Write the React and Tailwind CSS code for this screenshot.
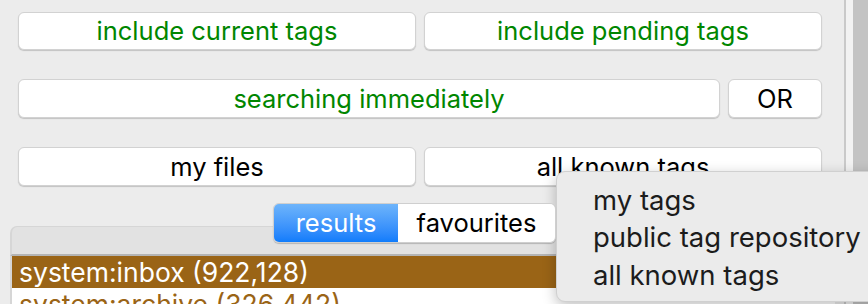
import React from "react";

const font = { fontFamily: "Inter, 'Liberation Sans', sans-serif" };

function Btn({ children, className = "", green = false }) {
  return (
    <div
      className={`flex items-center justify-center bg-white rounded-[6px] border border-[#d2d2d2] shadow-[0_1px_1px_rgba(0,0,0,0.18)] text-[25.5px] leading-none ${green ? "text-[#008600]" : "text-black"} ${className}`}
    >
      {children}
    </div>
  );
}

export default function App() {
  return (
    <div
      className="w-[868px] h-[304px] bg-[#ececec] relative overflow-hidden flex"
      style={font}
    >
      <div className="w-[844px] flex flex-col">
        <div className="pl-[18px] w-[822px] flex flex-col">
          <div className="mt-[12px] flex gap-[8px] h-[38px]">
            <Btn green className="w-[398px]">include current tags</Btn>
            <Btn green className="w-[398px]">include pending tags</Btn>
          </div>
          <div className="mt-[29px] flex gap-[8px] h-[39px]">
            <Btn green className="w-[702px]">searching immediately</Btn>
            <Btn className="w-[94px]">OR</Btn>
          </div>
          <div className="mt-[29px] flex gap-[8px] h-[39px]">
            <Btn className="w-[398px]">my files</Btn>
            <Btn className="w-[398px]">all known tags</Btn>
          </div>
        </div>
        <div className="mt-[17px] flex flex-col pl-[10px] w-[835px]">
          <div className="relative z-10 flex pl-[263px] -mb-[17px]">
            <div className="flex h-[40px] rounded-[6px] shadow-[0_1px_1px_rgba(0,0,0,0.2)] border border-[#cfcfcf] overflow-hidden text-[25.5px] leading-none">
              <div className="w-[124px] flex items-center justify-center text-white bg-gradient-to-b from-[#6db4fb] to-[#0f7cfb]">
                results
              </div>
              <div className="w-[157px] flex items-center justify-center bg-white text-black">
                favourites
              </div>
            </div>
          </div>
          <div className="rounded-tl-[7px] rounded-tr-[7px] border-l-2 border-t border-[#d6d6d6] bg-[#e2e2e2] h-[30px] border-b-2 border-b-[#b4b4b4]" />
          <div className="border-l-2 border-[#d6d6d6] bg-white flex flex-col text-[26.5px] leading-none">
            <div className="h-[32px] bg-[#9a6416] text-white flex items-center pl-[7px]">
              system:inbox (922,128)
            </div>
            <div className="h-[32px] text-[#9a6416] flex items-center pl-[7px]">
              system:archive (326,442)
            </div>
          </div>
        </div>
      </div>
      <div className="w-[2px] bg-[#c9c9c9]" />
      <div className="w-[7px] bg-[#f2f2f2]" />
      <div className="flex-1 bg-[#c3c3c3]" />

      <div className="absolute left-[556px] top-[171px] w-[340px] h-[131px] rounded-[9px] bg-[#ebebeb] border border-[#d0d0d0] shadow-[0_4px_14px_rgba(0,0,0,0.25)] pt-[10px] pl-[36px] text-[27.5px] text-[#1c1c1c]">
        <div className="h-[37px] flex items-center">my tags</div>
        <div className="h-[38px] flex items-center">public tag repository</div>
        <div className="h-[37px] flex items-center">all known tags</div>
      </div>
    </div>
  );
}
